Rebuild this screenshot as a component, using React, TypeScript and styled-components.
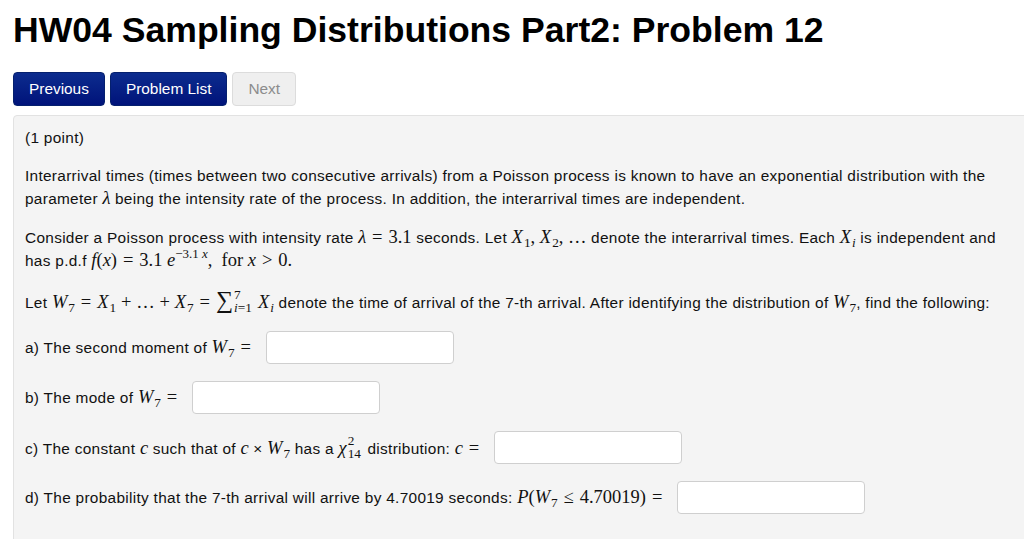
import React from 'react';
import styled, {createGlobalStyle} from 'styled-components';

const GlobalStyle = createGlobalStyle`
    html, body {
        margin:0;
        padding:0;
        background:#fff;
        overflow:hidden;
    }
    body {
        font-family:"Liberation Sans", Arial, Helvetica, sans-serif;
        color:#111;
    }
`;

const Page = styled.div`
    padding:12px 0 0 13px;
    width:1060px;
`;

const Title = styled.h1`
    margin:0;
    font-size:35.6px;
    line-height:36px;
    font-weight:700;
    color:#000;
`;

const NavRow = styled.div`
    display:flex;
    gap:5px;
    margin-top:24px;
`;

const NavButton = styled.button<{disabled?:boolean}>`
    height:34px;
    padding:0 15px;
    border-radius:4px;
    font-family:inherit;
    font-size:15.4px;
    cursor:pointer;
    border:1px solid ${({disabled})=>disabled ? '#dcdcdc' : '#05206e'};
    color:${({disabled})=>disabled ? '#8c8c8c' : '#fff'};
    background:${({disabled})=>disabled
        ? '#efefef'
        : 'linear-gradient(to bottom, #0c2c8e, #00137a)'};
`;

const Panel = styled.div`
    margin-top:9px;
    border:1px solid #e2e2e2;
    border-radius:4px;
    background:#f4f4f4;
    padding:10px 40px 40px 11px;
    font-size:15.4px;
    line-height:23px;
    letter-spacing:0.3px;
`;

const Content = styled.div`
    width:985px;
`;

const Para = styled.p<{gap?:number}>`
    margin:${({gap})=>gap ?? 15}px 0 0;
`;

const M = styled.span`
    font-family:"Liberation Serif", "Times New Roman", serif;
    font-size:18.5px;
    letter-spacing:0;
    white-space:nowrap;
`;

const V = styled.i`
    font-style:italic;
`;

const Op = styled.span<{thin?:boolean}>`
    margin:0 ${({thin})=>thin ? 0.26 : 0.32}em;
`;

const Sub = styled.sub`
    font-size:0.72em;
    vertical-align:-0.3em;
    line-height:0;
    margin-left:1px;
`;

const Sup = styled.sup`
    font-size:0.7em;
    vertical-align:0.6em;
    line-height:0;
`;

const Stack = styled.span<{after?:number}>`
    display:inline-flex;
    flex-direction:column;
    vertical-align:0.7em;
    font-size:0.72em;
    line-height:0.95em;
    height:0.95em;
    margin:0 ${({after})=>after ?? 2}px 0 1px;
`;

const BigOp = styled.span`
    font-size:1.3em;
    line-height:0;
`;

const PartRow = styled.div`
    display:flex;
    align-items:center;
    height:33px;
    margin-top:17px;
`;

const Answer = styled.input`
    width:188px;
    height:33px;
    box-sizing:border-box;
    margin-left:9px;
    border:1px solid #cfcfcf;
    border-radius:4px;
    background:#fff;
    font-size:15px;
`;

const App:React.FC = () => {
    return <Page>
        <GlobalStyle />
        <Title>HW04 Sampling Distributions Part2: Problem 12</Title>
        <NavRow>
            <NavButton>Previous</NavButton>
            <NavButton>Problem List</NavButton>
            <NavButton disabled>Next</NavButton>
        </NavRow>
        <Panel>
            <Content>
                <Para gap={0}>(1 point)</Para>
                <Para>
                    Interarrival times (times between two consecutive arrivals) from a Poisson process is known to have an exponential distribution with the
                    parameter <M><V>λ</V></M> being the intensity rate of the process. In addition, the interarrival times are independent.
                </Para>
                <Para gap={16}>
                    Consider a Poisson process with intensity rate <M><V>λ</V><Op>=</Op>3.1</M> seconds. Let <M><V>X</V><Sub>1</Sub>, <V>X</V><Sub>2</Sub>, …</M> denote the interarrival times. Each <M><V>X</V><Sub><V>i</V></Sub></M> is independent and
                    has p.d.f <M><V>f</V>(<V>x</V>)<Op>=</Op>3.1 <V>e</V><Sup>−3.1 <V>x</V></Sup>,&nbsp; for <V>x</V><Op>&gt;</Op>0.</M>
                </Para>
                <Para gap={17}>
                    Let <M><V>W</V><Sub>7</Sub><Op>=</Op><V>X</V><Sub>1</Sub><Op thin>+</Op>…<Op thin>+</Op><V>X</V><Sub>7</Sub><Op>=</Op><BigOp>∑</BigOp><Stack after={6}><span>7</span><span><V>i</V>=1</span></Stack><V>X</V><Sub><V>i</V></Sub></M> denote the time of arrival of the 7-th arrival. After identifying the distribution of <M><V>W</V><Sub>7</Sub></M>, find the following:
                </Para>
                <PartRow>
                    <span>a) The second moment of <M><V>W</V><Sub>7</Sub><Op>=</Op></M></span>
                    <Answer type="text" />
                </PartRow>
                <PartRow>
                    <span>b) The mode of <M><V>W</V><Sub>7</Sub><Op>=</Op></M></span>
                    <Answer type="text" />
                </PartRow>
                <PartRow>
                    <span>c) The constant <M><V>c</V></M> such that of <M><V>c</V></M> × <M><V>W</V><Sub>7</Sub></M> has a <M><V>χ</V><Stack><span>2</span><span>14</span></Stack></M> distribution: <M><V>c</V><Op>=</Op></M></span>
                    <Answer type="text" />
                </PartRow>
                <PartRow>
                    <span>d) The probability that the 7-th arrival will arrive by 4.70019 seconds: <M><V>P</V>(<V>W</V><Sub>7</Sub><Op>≤</Op>4.70019)<Op>=</Op></M></span>
                    <Answer type="text" />
                </PartRow>
            </Content>
        </Panel>
    </Page>;
}

export default App;
